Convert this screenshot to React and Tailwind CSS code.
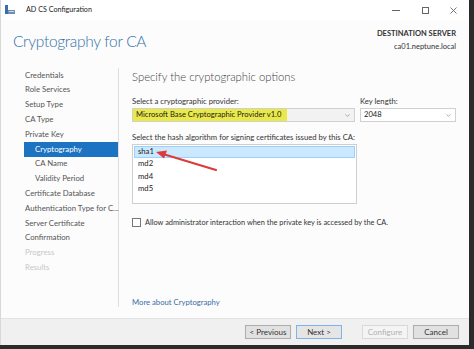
import { ChevronDown } from "lucide-react";

const font = { fontFamily: 'Lato, "Noto Sans", sans-serif' };

// wizard steps on the left
const steps = [
  { label: "Credentials" },
  { label: "Role Services" },
  { label: "Setup Type" },
  { label: "CA Type" },
  { label: "Private Key" },
  { label: "Cryptography", sub: true, active: true },
  { label: "CA Name", sub: true },
  { label: "Validity Period", sub: true },
  { label: "Certificate Database" },
  { label: "Authentication Type for C..." },
  { label: "Server Certificate" },
  { label: "Confirmation" },
  { label: "Progress", disabled: true },
  { label: "Results", disabled: true },
];

const AppIcon = () => (
  <svg width="10" height="10" viewBox="0 0 10 10">
    <rect x="0" y="0" width="3" height="9" fill="#3b6ea8" />
    <rect x="3" y="5" width="7" height="4" fill="#6d8fb3" />
    <rect x="4" y="6" width="5" height="1" fill="#c9d9ea" />
  </svg>
);

function Button({ children, focused, disabled }) {
  return (
    <div
      className={`w-[46px] h-[14px] flex items-center justify-center text-[8px] border ${
        focused
          ? "border-[#7eb4ea] bg-[#e5e5e5] text-[#333]"
          : disabled
          ? "border-[#d9d9d9] bg-[#f4f4f4] text-[#b0b0b0]"
          : "border-[#adadad] bg-[#e1e1e1] text-[#333]"
      }`}
    >
      {children}
    </div>
  );
}

export default function App() {
  return (
    <div className="w-[474px] h-[349px] bg-[#2b2b2b] overflow-hidden" style={font}>
      <div className="w-[469px] h-[345px] bg-[#fcfcfc] flex flex-col border-l border-[#d8d8d8]">
        {/* title bar */}
        <div className="h-[20px] flex items-center pl-[4px] pr-[12px] bg-white">
          <AppIcon />
          <span className="ml-[11px] text-[7.2px] text-[#222]">AD CS Configuration</span>
          <div className="ml-auto flex items-center">
            <div className="w-[8px] h-px bg-[#666]" />
            <div className="ml-[22px] w-[7px] h-[7px] border border-[#666]" />
            <svg className="ml-[21px]" width="7" height="7" viewBox="0 0 7 7" stroke="#666" strokeWidth="0.9">
              <path d="M0.5 0.5L6.5 6.5M6.5 0.5L0.5 6.5" />
            </svg>
          </div>
        </div>

        {/* header */}
        <div className="h-[42px] flex items-start justify-between pl-[12px] pr-[13px]">
          <h1 className="text-[15.5px] leading-none text-[#3070a8] font-light mt-[14px] tracking-[-0.3px]">
            Cryptography for CA
          </h1>
          <div className="text-right mt-[7px] text-[7.5px] text-[#333] leading-[13px]">
            <div className="font-bold">DESTINATION SERVER</div>
            <div>ca01.neptune.local</div>
          </div>
        </div>

        {/* body */}
        <div className="flex-1 flex pt-[6px] pb-[11px]">
          <nav className="w-[118px] pl-[23px] border-r border-[#dedede] text-[7.8px]">
            {steps.map((s) => (
              <div
                key={s.label}
                className={`h-[14.8px] flex items-center whitespace-nowrap ${
                  s.sub ? "pl-[11px]" : "pl-px"
                } ${
                  s.active
                    ? "bg-[#1c73c2] text-white"
                    : s.disabled
                    ? "text-[#c8c8c8]"
                    : "text-[#555]"
                }`}
              >
                {s.label}
              </div>
            ))}
          </nav>

          <section className="flex-1 pl-[13px] pr-[13px] flex flex-col">
            <h2 className="text-[11.3px] leading-[15px] text-[#444] font-light mt-[1px]">
              Specify the cryptographic options
            </h2>

            <div className="flex gap-[5px] mt-[12px]">
              <div className="w-[223px]">
                <div className="text-[7.7px] text-[#333] leading-[10px]">
                  Select a cryptographic provider:
                </div>
                <div className="mt-[2px] h-[14px] border border-[#d0d0d0] bg-[#f2f2f2] flex items-center pr-[3px]">
                  <div className="h-full w-[154px] bg-[#e9e94a] flex items-center pl-[3px] text-[7.6px] text-[#222] whitespace-nowrap">
                    Microsoft Base Cryptographic Provider v1.0
                  </div>
                  <ChevronDown size={7} className="ml-auto text-[#777]" strokeWidth={2} />
                </div>
              </div>
              <div className="w-[96px]">
                <div className="text-[7.7px] text-[#333] leading-[10px]">Key length:</div>
                <div className="mt-[2px] h-[14px] border border-[#d0d0d0] bg-white flex items-center pl-[3px] pr-[3px] text-[7.6px] text-[#222]">
                  2048
                  <ChevronDown size={7} className="ml-auto text-[#777]" strokeWidth={2} />
                </div>
              </div>
            </div>

            <div className="mt-[10px] text-[7.7px] text-[#333] leading-[10px] whitespace-nowrap">
              Select the hash algorithm for signing certificates issued by this CA:
            </div>
            <div className="relative mt-[2px] w-[225px] h-[60px] border border-[#cfcfcf] bg-white text-[7.7px] text-[#222] p-px">
              <div className="h-[12px] bg-[#cce8ff] border border-[#99d1ff] flex items-center pl-[3px]">
                sha1
              </div>
              {["md2", "md4", "md5"].map((m) => (
                <div key={m} className="h-[12.5px] flex items-center pl-[4px]">
                  {m}
                </div>
              ))}
              {/* red annotation arrow */}
              <svg
                className="absolute left-[20px] top-[4px]"
                width="70"
                height="24"
                viewBox="0 0 70 24"
              >
                <path d="M63 21L10 5" stroke="#dc3b3b" strokeWidth="2.2" strokeLinecap="round" />
                <path d="M3 3L14 1.5L11 9.5Z" fill="#dc3b3b" />
              </svg>
            </div>

            <label className="mt-[13px] flex items-center gap-[4px] text-[7.4px] text-[#333] whitespace-nowrap">
              <span className="w-[9px] h-[9px] border border-[#777] bg-white" />
              Allow administrator interaction when the private key is accessed by the CA.
            </label>

            <a className="mt-auto text-[7.7px] text-[#3a6ea5] leading-[10px]">More about Cryptography</a>
          </section>
        </div>

        {/* footer */}
        <div className="h-[27px] bg-[#f0f0f0] border-t border-[#e2e2e2] flex items-center justify-end pr-[10px] pb-[1px]">
          <div className="flex gap-[5px]">
            <Button>&lt; Previous</Button>
            <Button focused>Next &gt;</Button>
          </div>
          <div className="flex gap-[5px] ml-[20px]">
            <Button disabled>Configure</Button>
            <Button>Cancel</Button>
          </div>
        </div>
      </div>
    </div>
  );
}
